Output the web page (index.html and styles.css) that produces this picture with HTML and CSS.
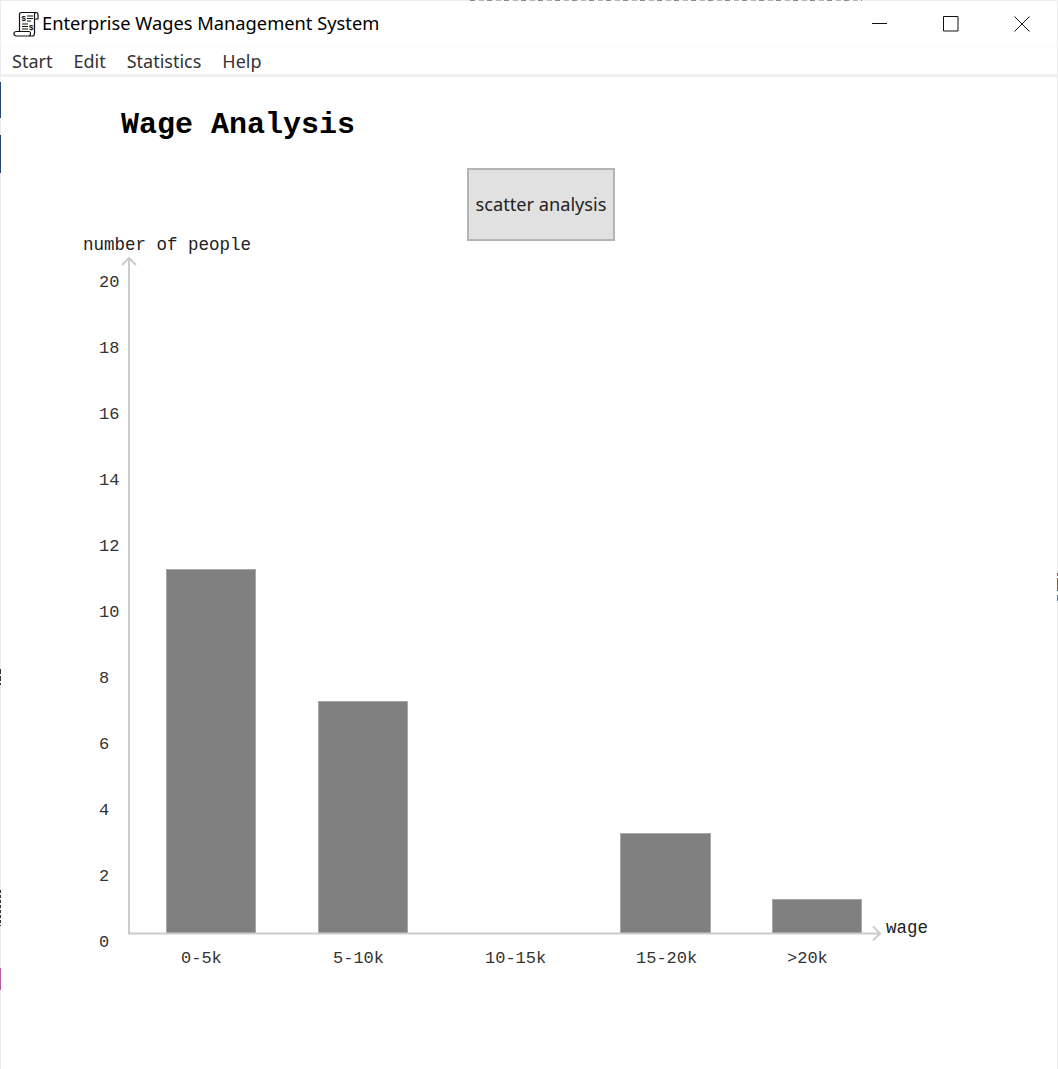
FILE: index.html
```html
<!DOCTYPE html>
<html lang="en">
<head>
<meta charset="utf-8">
<title>Enterprise Wages Management System</title>
<link rel="stylesheet" href="styles.css">
</head>
<body>
<div class="window">
  <span class="sliver top-strip"></span>
  <span class="sliver left-a"></span>
  <span class="sliver left-b"></span>
  <span class="sliver left-c"></span>
  <span class="sliver left-d"></span>
  <span class="sliver left-e"></span>
  <span class="sliver right-a"></span>

  <header class="titlebar">
    <svg class="app-icon" viewBox="0 0 26 26" width="26" height="26" aria-hidden="true">
      <path class="ink" d="M6.500 20V3.500Q6.500 1.500 8.500 1.500H23.500Q25 1.500 25 4V8H21.500V3.500Q21.500 1.500 23.500 1.500"/>
      <path class="ink" d="M21.500 8V22.500Q21.500 25 19 25H3.500Q1 25 1 22.500Q1 20.500 3.500 20.500H16Q17.500 20.500 17.500 22.500Q17.500 25 15.500 25"/>
      <path class="ink" d="M14 5H20M14 7.500H20M14 10H18M9 13H15M9 15.500H15M9 18H15"/>
      <text class="icon-dollar" x="8.500" y="10">$</text>
      <text class="icon-dollar" x="16" y="18.500">$</text>
    </svg>
    <span class="app-title">Enterprise Wages Management System</span>
    <div class="controls">
      <svg class="control" viewBox="0 0 16 16" width="16" height="16" aria-hidden="true"><path d="M0 7.500H15"/></svg>
      <svg class="control" viewBox="0 0 16 16" width="16" height="16" aria-hidden="true"><path d="M.5 .5H15V15H.5Z"/></svg>
      <svg class="control" viewBox="0 0 16 16" width="16" height="16" aria-hidden="true"><path d="M.5 .5L15.500 15.500M15.500 .5L.5 15.500"/></svg>
    </div>
  </header>

  <nav class="menubar">
    <span class="menu-item">Start</span>
    <span class="menu-item">Edit</span>
    <span class="menu-item">Statistics</span>
    <span class="menu-item">Help</span>
  </nav>

  <main class="content">
    <h1 class="heading">Wage Analysis</h1>
    <button class="scatter-btn" type="button">scatter analysis</button>
    <svg class="chart" viewBox="0 241 1058 759" width="1058" height="759" role="img" aria-label="Wage histogram">
      <g class="bars">
        <rect x="166.500" y="569.500" width="89" height="364"/>
        <rect x="318.500" y="701.500" width="89" height="232"/>
        <rect x="620.500" y="833.500" width="90" height="100"/>
        <rect x="772.500" y="899.500" width="89" height="34"/>
      </g>
      <path class="axis" d="M129 258V933.500H880M122 265L129 258L136 265M873 926.500L880 933.500L873 940.500"/>
      <text class="axis-name" x="83" y="250">number of people</text>
      <text class="axis-name" x="886" y="933">wage</text>
      <g class="tick">
        <text x="99" y="287">20</text>
        <text x="99" y="353">18</text>
        <text x="99" y="419">16</text>
        <text x="99" y="485">14</text>
        <text x="99" y="551">12</text>
        <text x="99" y="617">10</text>
        <text x="99" y="683">8</text>
        <text x="99" y="749">6</text>
        <text x="99" y="815">4</text>
        <text x="99" y="881">2</text>
        <text x="99" y="947">0</text>
      </g>
      <g class="tick">
        <text x="181" y="963">0-5k</text>
        <text x="333" y="963">5-10k</text>
        <text x="485" y="963">10-15k</text>
        <text x="636" y="963">15-20k</text>
        <text x="787" y="963">&gt;20k</text>
      </g>
    </svg>
  </main>
</div>
</body>
</html>
```
FILE: styles.css
```css
* {
  box-sizing: border-box;
}

html,
body {
  margin: 0;
  padding: 0;
  background: #ffffff;
}

.window {
  position: relative;
  display: flex;
  flex-direction: column;
  width: 1058px;
  height: 1069px;
  background: #ffffff;
  border-left: 1px solid #ececec;
  border-right: 1px solid #ececec;
  border-top: 1px solid #ececec;
  font-family: "Noto Sans", "Open Sans", sans-serif;
}

/* Slivers of the desktop that show behind the window edges */
.sliver {
  position: absolute;
  z-index: 2;
}

.top-strip {
  top: -1px;
  left: 469px;
  width: 392px;
  height: 1px;
  background: repeating-linear-gradient(90deg, #8a8a8a 0 5px, #f4f4f4 5px 9px, #b5b5b5 9px 14px, #f4f4f4 14px 17px);
}

.left-a {
  left: -1px;
  top: 81px;
  width: 1px;
  height: 36px;
  background: #27466b;
}

.left-b {
  left: -1px;
  top: 134px;
  width: 1px;
  height: 38px;
  background: #27466b;
}

.left-c {
  left: -1px;
  top: 668px;
  width: 1px;
  height: 16px;
  background: repeating-linear-gradient(180deg, #333 0 5px, #eee 5px 7px);
}

.left-d {
  left: -1px;
  top: 889px;
  width: 1px;
  height: 36px;
  background: repeating-linear-gradient(180deg, #333 0 3px, #eee 3px 5px);
}

.left-e {
  left: -1px;
  top: 967px;
  width: 1px;
  height: 22px;
  background: #b45ca0;
}

.right-a {
  right: -1px;
  top: 572px;
  width: 1px;
  height: 28px;
  background: linear-gradient(180deg, #7d6a66 0 3px, #fff 3px 5px, #8c5a44 5px 18px, #fff 18px 22px, #6c7a90 22px);
}

.titlebar {
  display: flex;
  align-items: center;
  flex: none;
  height: 46px;
  padding-left: 12px;
  border-bottom: 1px solid #fafafa;
}

.app-icon {
  flex: none;
  margin-right: 3px;
}

.ink {
  fill: none;
  stroke: #111111;
  stroke-width: 1.200;
}

.icon-dollar {
  font-family: "Liberation Sans", sans-serif;
  font-size: 8px;
  font-weight: 700;
  fill: #111111;
}

.app-title {
  font-size: 18.300px;
  line-height: 24px;
  position: relative;
  top: -1px;
  color: #000000;
  white-space: nowrap;
}

.controls {
  display: flex;
  gap: 55px;
  margin-left: auto;
  margin-right: 27px;
}

.control {
  display: block;
  fill: none;
  stroke: #111111;
  stroke-width: 1;
  overflow: visible;
}

.menubar {
  display: flex;
  align-items: center;
  flex: none;
  gap: 21px;
  height: 30px;
  padding: 1px 0 0 11px;
  border-bottom: 3px solid #f0f0f0;
  font-size: 18px;
  color: #333333;
}

.content {
  display: flex;
  flex-direction: column;
  align-items: flex-start;
  flex: 1;
}

.heading {
  margin: 27px 0 0 120px;
  font-family: "Liberation Mono", monospace;
  font-size: 30px;
  line-height: 42px;
  font-weight: 700;
  color: #000000;
}

.scatter-btn {
  width: 148px;
  height: 73px;
  margin: 22px 0 0 466px;
  padding: 0 0 2px;
  background: #e1e1e1;
  border: 2px solid #b4b4b4;
  font-family: "Noto Sans", "Open Sans", sans-serif;
  font-size: 18.200px;
  color: #222222;
}

.chart {
  display: block;
  margin-left: -1px;
  flex: none;
  overflow: visible;
}

.bars rect {
  fill: #808080;
  stroke: #a8a8a8;
  stroke-width: 1;
}

.axis {
  fill: none;
  stroke: #cccccc;
  stroke-width: 2;
}

.axis-name {
  font-family: "Liberation Mono", monospace;
  font-size: 17.500px;
  fill: #222222;
}

.tick text {
  font-family: "Liberation Mono", monospace;
  font-size: 17px;
  fill: #333333;
}
```
